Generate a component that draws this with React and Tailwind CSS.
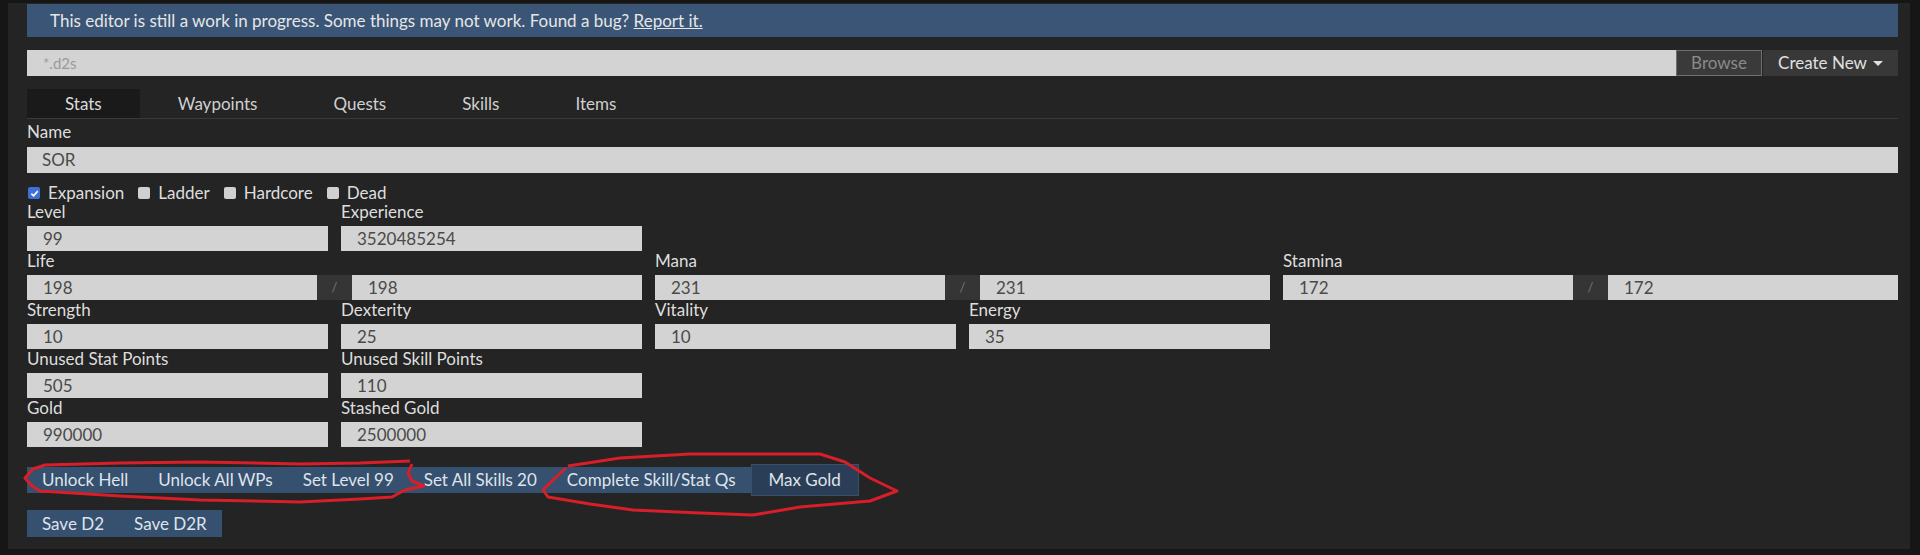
import React from 'react';

const font = { fontFamily: 'Lato, "Open Sans", sans-serif' };

function Field({ label, value, className = '' }) {
  return (
    <div className={className}>
      <div className="text-[17px] leading-[20px] text-[#dedede] mb-[4px]">{label}</div>
      <div className="h-[25px] bg-[#d3d3d3] pl-[16px] flex items-center text-[17px] text-[#4a4a4a]">{value}</div>
    </div>
  );
}

function SplitField({ label, left, right, className = '' }) {
  return (
    <div className={className}>
      <div className="text-[17px] leading-[20px] text-[#dedede] mb-[4px]">{label}</div>
      <div className="flex h-[25px]">
        <div className="flex-1 bg-[#d3d3d3] pl-[16px] flex items-center text-[17px] text-[#4a4a4a]">{left}</div>
        <div className="w-[35px] bg-[#353535] flex items-center justify-center text-[13px] text-[#777]">/</div>
        <div className="flex-1 bg-[#d3d3d3] pl-[16px] flex items-center text-[17px] text-[#4a4a4a]">{right}</div>
      </div>
    </div>
  );
}

function Check({ label, checked }) {
  return (
    <div className="flex items-center mr-[14px]">
      {checked ? (
        <span className="w-[12px] h-[12px] rounded-[2px] bg-[#3f6fd8] flex items-center justify-center mr-[8px]">
          <svg width="9" height="9" viewBox="0 0 10 10">
            <path d="M1.5 5.2 L4 7.6 L8.6 2.4" stroke="#fff" strokeWidth="1.8" fill="none" />
          </svg>
        </span>
      ) : (
        <span className="w-[12px] h-[12px] rounded-[2px] bg-[#d0d0d0] mr-[8px]" />
      )}
      <span className="text-[17px] text-[#dedede]">{label}</span>
    </div>
  );
}

const tabs = ['Stats', 'Waypoints', 'Quests', 'Skills', 'Items'];

export default function App() {
  return (
    <div className="w-[1920px] h-[555px] bg-[#161616] pt-[3px] pl-[8px] pr-[10px] pb-[6px] overflow-hidden" style={font}>
      <div className="relative h-full bg-[#242424] pl-[19px] pr-[12px] pt-[1px]">
        {/* banner */}
        <div className="h-[33px] bg-[#3a5576] flex items-center pl-[23px] text-[17px] text-[#e6e6e6]">
          <span>
            This editor is still a work in progress. Some things may not work. Found a bug?{' '}
            <span className="underline">Report it.</span>
          </span>
        </div>

        {/* file row */}
        <div className="mt-[13px] h-[26px] flex">
          <div className="flex-1 bg-[#d3d3d3] pl-[16px] flex items-center text-[15px] text-[#9a9a9a]">*.d2s</div>
          <div className="w-[86px] bg-[#3a3a3a] border border-[#6f6f6f] flex items-center justify-center text-[17px] text-[#8a8a8a]">Browse</div>
          <div className="w-[135px] ml-[1px] bg-[#383838] flex items-center justify-center text-[17px] text-[#e0e0e0]">
            Create New
            <span className="ml-[6px] w-0 h-0 border-t-[5px] border-x-[5px] border-x-transparent border-t-[#e0e0e0]" />
          </div>
        </div>

        {/* tabs */}
        <div className="mt-[13px] flex border-b border-[#3a3a3a]">
          {tabs.map((t, i) => (
            <div
              key={t}
              className={
                i === 0
                  ? 'h-[29px] px-[38px] flex items-center text-[17px] text-[#dcdcdc] bg-[#1a1a1a]'
                  : 'h-[29px] px-[38px] flex items-center text-[17px] text-[#d0d0d0]'
              }
            >
              {t}
            </div>
          ))}
        </div>

        {/* name */}
        <div className="mt-[3px]">
          <div className="text-[17px] leading-[20px] text-[#dedede] mb-[5px]">Name</div>
          <div className="h-[26px] bg-[#d3d3d3] pl-[15px] flex items-center text-[17px] text-[#4a4a4a]">SOR</div>
        </div>

        {/* flags */}
        <div className="mt-[11px] h-[18px] flex items-center pl-[1px]">
          <Check label="Expansion" checked />
          <Check label="Ladder" />
          <Check label="Hardcore" />
          <Check label="Dead" />
        </div>

        {/* stats grid */}
        <div className="grid grid-cols-6 gap-x-[13px]">
          <Field label="Level" value="99" />
          <Field label="Experience" value="3520485254" />
          <div className="col-span-4" />

          <SplitField className="col-span-2" label="Life" left="198" right="198" />
          <SplitField className="col-span-2" label="Mana" left="231" right="231" />
          <SplitField className="col-span-2" label="Stamina" left="172" right="172" />

          <Field label="Strength" value="10" />
          <Field label="Dexterity" value="25" />
          <Field label="Vitality" value="10" />
          <Field label="Energy" value="35" />
          <div className="col-span-2" />

          <Field label="Unused Stat Points" value="505" />
          <Field label="Unused Skill Points" value="110" />
          <div className="col-span-4" />

          <Field label="Gold" value="990000" />
          <Field label="Stashed Gold" value="2500000" />
          <div className="col-span-4" />
        </div>

        {/* actions */}
        <div className="mt-[20px] h-[26px] flex items-center">
          <div className="flex h-[26px] bg-[#36506f] text-[17px] text-[#dfe4ea]">
            <div className="px-[15px] flex items-center">Unlock Hell</div>
            <div className="px-[15px] flex items-center">Unlock All WPs</div>
            <div className="px-[15px] flex items-center">Set Level 99</div>
            <div className="px-[15px] flex items-center">Set All Skills 20</div>
            <div className="px-[15px] flex items-center">Complete Skill/Stat Qs</div>
          </div>
          <div className="h-[32px] px-[17px] flex items-center bg-[#2b3e58] border border-[#3a4e69] text-[17px] text-[#dfe4ea]">Max Gold</div>
        </div>

        <div className="mt-[17px] flex">
          <div className="flex h-[27px] bg-[#36506f] text-[17px] text-[#dfe4ea]">
            <div className="px-[15px] flex items-center">Save D2</div>
            <div className="px-[15px] flex items-center">Save D2R</div>
          </div>
        </div>
      </div>

      {/* hand-drawn annotation marks */}
      <svg className="absolute left-0 top-0 pointer-events-none" width="1920" height="555">
        <path
          d="M410 461 L360 463 L300 464 L200 462 L120 463 L45 465 L33 469 L25 478 L32 486 L40 491 L120 496 L200 500 L300 502 L360 499 L392 497 L405 490 L424 486 L412 481 L408 473 L412 464"
          stroke="#d81e28"
          strokeWidth="3"
          fill="none"
          strokeLinejoin="round"
        />
        <path
          d="M568 466 L620 458 L690 454 L820 454 L845 462 L870 478 L897 491 L870 501 L800 507 L753 515 L700 513 L633 510 L590 504 L548 497 L543 490 L555 478 L566 468"
          stroke="#d81e28"
          strokeWidth="3"
          fill="none"
          strokeLinejoin="round"
        />
      </svg>
    </div>
  );
}
